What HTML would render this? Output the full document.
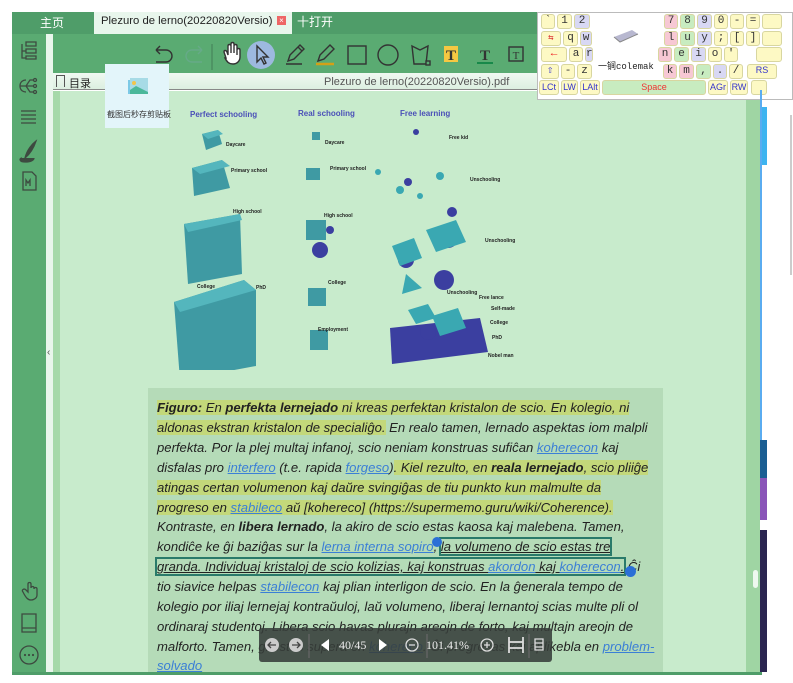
<!DOCTYPE html>
<html><head><meta charset="utf-8"><style>
*{margin:0;padding:0;box-sizing:border-box}
body{width:793px;height:683px;background:#fff;position:relative;overflow:hidden;font-family:"Liberation Sans","Noto Sans CJK SC",sans-serif}
.a{position:absolute}
.tx{position:absolute;left:157px;font-style:italic;font-size:13.1px;color:#222;white-space:nowrap;line-height:20px;font-family:"Liberation Sans",sans-serif}
.hl{background:#c3d87a}
.lk{color:#3b7fd6;text-decoration:underline}
.k{position:absolute;height:15px;background:#fdf9c4;border:1px solid #d8d6a0;border-radius:3px;font:11px "Liberation Mono",monospace;color:#333;text-align:center;line-height:13px}
.fl{font:bold 5px "Liberation Sans",sans-serif;color:#222;position:absolute}
</style></head><body>
<div class="a" style="left:12px;top:12px;width:750px;height:22px;background:#4f9d69"></div>
<div class="a" style="left:40px;top:14px;font-size:12px;color:#fff">主页</div>
<div class="a" style="left:94px;top:12px;width:198px;height:22px;background:#e8f6ec"></div>
<div class="a" style="left:101px;top:15px;font-size:11.3px;color:#222;white-space:nowrap">Plezuro de lerno(20220820Versio)</div>
<div class="a" style="left:277px;top:16px;width:9px;height:9px;background:#e66;color:#fff;font-size:8px;line-height:9px;text-align:center">×</div>
<div class="a" style="left:297px;top:13px;font-size:12px;color:#fff">十打开</div>
<div class="a" style="left:12px;top:34px;width:34px;height:641px;background:#5aab72"></div>
<div class="a" style="left:46px;top:34px;width:7px;height:638px;background:#e9f6ec"></div>
<div class="a" style="left:53px;top:34px;width:709px;height:39px;background:#5aab72"></div>
<div class="a" style="left:53px;top:73px;width:709px;height:17px;background:linear-gradient(#f0f9f2,#dcefe0);border-bottom:1px solid #888"></div>
<div class="a" style="left:56px;top:75px;width:9px;height:12px;border:1px solid #555;border-bottom:none"></div>
<div class="a" style="left:69px;top:75px;font-size:11px;color:#222">目录</div>
<div class="a" style="left:324px;top:76px;font-size:11px;color:#555">Plezuro de lerno(20220820Versio).pdf</div>
<div class="a" style="left:53px;top:91px;width:693px;height:581px;background:#c8ebcc"></div>
<div class="a" style="left:53px;top:91px;width:7px;height:581px;background:#a6d9aa"></div>
<div class="a" style="left:746px;top:91px;width:14px;height:581px;background:#9fd5a3"></div>
<div class="a" style="left:753px;top:570px;width:5px;height:18px;background:#eef8ef;border-radius:3px"></div>
<div class="a" style="left:47px;top:347px;font-size:10px;color:#555">‹</div>
<div class="a" style="left:12px;top:672px;width:750px;height:3px;background:#4f9d69"></div>
<svg class="a" style="left:12px;top:34px" width="34" height="641" fill="none" stroke="#3d4a40" stroke-width="1.3">
<path d="M10 10v14h4M10 17h4M14 8h10v4h-10zM14 15h10v4h-10zM14 22h10v3h-10z"/>
<path d="M8 52h6l4-6h4M14 52l4 0h4M14 52l4 6h4M8 52c0-5 4-6 6-6M8 52c0 5 4 6 6 6" /><circle cx="23" cy="46" r="1.5"/><circle cx="23" cy="52" r="1.5"/><circle cx="23" cy="58" r="1.5"/>
<path d="M9 77h15M9 81h15M9 85h15M9 89h15"/>
<path d="M10 124c-3 0-3 4 3 4s9-2 9-4M13 124c2-8 7-14 11-17c-2 6-5 12-11 17z" fill="#3d4a40"/>
<path d="M11 138h9l4 4v14h-13zM14 152v-6l2 3 2-3v6"/>
<path d="M11 558c-2-2 1-4 3-2l2 2v-8c0-2 3-2 3 0v4c0-2 3-2 3 0v1c0-2 3-2 3 0v6c0 3-3 5-6 5s-5-2-8-8z"/>
<path d="M10 580h14v18h-14zM10 594h14"/>
<circle cx="17" cy="621" r="9"/>
<g fill="#3d4a40" stroke="none"><circle cx="13" cy="621" r="1.1"/><circle cx="17" cy="621" r="1.1"/><circle cx="21" cy="621" r="1.1"/></g>
</svg>
<svg class="a" style="left:140px;top:34px" width="400" height="40" fill="none" stroke="#333" stroke-width="1.4">
<path d="M16 16h10a6 6 0 0 1 0 12h-10M16 16l4-4M16 16l4 4"/>
<path d="M62 16h-10a6 6 0 0 0 0 12h10M62 16l-4-4M62 16l-4 4" stroke="#6a8" />
<path d="M72 10v26" stroke="#4a8a5e"/>
<path d="M86 24l-2-6c0-2 2-2 3 0l1 3v-9c0-2 3-2 3 0v7-9c0-2 3-2 3 0v9-7c0-2 3-2 3 0v9-5c0-2 3-2 3 0v7c0 4-3 7-7 7-4 0-6-2-8-6z" fill="#fff"/>
<circle cx="121" cy="21" r="14" fill="#9db9df" stroke="none"/>
<path d="M117 12v16l4-4 3 6 2-1-3-6h5z"/>
<path d="M146 30h16M148 27l2-6 10-10 4 4-10 10zM158 13l4 4"/>
<path d="M176 30h18" stroke="#d4a017" stroke-width="2.5"/><path d="M178 27l2-6 10-10 4 4-10 10z"/>
<rect x="208" y="12" width="18" height="18"/>
<circle cx="248" cy="21" r="10"/>
<path d="M272 12l8 4 8-4-2 18h-12z"/><rect x="286" y="27" width="4" height="4" fill="#5aab72"/>
<rect x="304" y="12" width="14" height="16" fill="#f5c842" stroke="none"/>
<text x="311" y="26" font-family="Liberation Serif" font-size="15" fill="#333" stroke="none" text-anchor="middle" font-weight="bold">T</text>
<text x="345" y="26" font-family="Liberation Serif" font-size="15" fill="#333" stroke="none" text-anchor="middle" font-weight="bold">T</text>
<path d="M337 29h16" stroke="#18894a" stroke-width="2"/>
<rect x="369" y="13" width="14" height="14"/>
<text x="376" y="25" font-family="Liberation Serif" font-size="11" fill="#333" stroke="none" text-anchor="middle">T</text>
</svg>
<div class="a" style="left:105px;top:64px;width:64px;height:64px;background:#e3f5fa"></div>
<svg class="a" style="left:126px;top:76px" width="24" height="22"><rect x="2" y="4" width="18" height="14" fill="#7cc9e6"/><rect x="4" y="2" width="18" height="16" fill="#a7dbe6"/><path d="M4 14l6-4 12 6v2h-18z" fill="#4bb89a"/><circle cx="8" cy="7" r="2" fill="#f3c54b"/></svg>
<div class="a" style="left:107px;top:109px;font-size:8px;color:#333">截图后秒存剪贴板</div>
<div class="a" style="left:190px;top:110px;font:bold 8px 'Liberation Sans';color:#4a4fb8">Perfect schooling</div>
<div class="a" style="left:298px;top:109px;font:bold 8px 'Liberation Sans';color:#4a4fb8">Real schooling</div>
<div class="a" style="left:400px;top:109px;font:bold 8px 'Liberation Sans';color:#4a4fb8">Free learning</div>
<svg class="a" style="left:170px;top:120px" width="360" height="250">
<g fill="#3f9aa3"><path d="M32 14l16-4 4 14-16 6z"/><path d="M22 48l30-8 8 28-36 8z"/><path d="M14 104l56-10 2 60-54 10z"/><path d="M4 182l70-22 12 10v76l-76 14z"/></g>
<g fill="#54b6bd"><path d="M32 14l16-4 5 4-15 5z"/><path d="M22 48l30-8 8 6-30 8z"/><path d="M14 104l56-10 2 6-54 12z"/><path d="M4 182l70-22 12 10-76 22z"/></g>
<g fill="#3f9aa3"><rect x="142" y="12" width="8" height="8"/><rect x="136" y="48" width="14" height="12"/><rect x="136" y="100" width="20" height="20"/><rect x="138" y="168" width="18" height="18"/><rect x="140" y="210" width="18" height="20"/></g>
<g fill="#3b3fa0"><circle cx="150" cy="130" r="8"/><circle cx="160" cy="110" r="4"/><circle cx="246" cy="12" r="3"/><circle cx="238" cy="62" r="4"/><circle cx="282" cy="92" r="5"/><path d="M220 208l90-10 8 34-96 12z"/><circle cx="236" cy="140" r="8"/><circle cx="278" cy="118" r="10"/><circle cx="274" cy="160" r="10"/><circle cx="258" cy="212" r="8"/></g>
<g fill="#3aa8b2"><path d="M222 126l22-8 8 20-22 8z"/><path d="M256 110l30-10 10 22-30 10z"/><path d="M236 154l16 14-20 6z"/><path d="M238 190l20-6 8 14-20 6z"/><path d="M262 196l26-8 8 20-26 8z"/><circle cx="208" cy="52" r="3"/><circle cx="230" cy="70" r="4"/><circle cx="270" cy="56" r="4"/><circle cx="250" cy="76" r="3"/></g>
</svg>
<div class="fl" style="left:226px;top:142px">Daycare</div><div class="fl" style="left:325px;top:140px">Daycare</div><div class="fl" style="left:449px;top:135px">Free kid</div>
<div class="fl" style="left:231px;top:168px">Primary school</div><div class="fl" style="left:330px;top:166px">Primary school</div><div class="fl" style="left:470px;top:177px">Unschooling</div>
<div class="fl" style="left:233px;top:209px">High school</div><div class="fl" style="left:324px;top:213px">High school</div><div class="fl" style="left:485px;top:238px">Unschooling</div>
<div class="fl" style="left:197px;top:284px">College</div><div class="fl" style="left:256px;top:285px">PhD</div><div class="fl" style="left:328px;top:280px">College</div><div class="fl" style="left:447px;top:290px">Unschooling</div><div class="fl" style="left:479px;top:295px">Free lance</div>
<div class="fl" style="left:491px;top:306px">Self-made</div><div class="fl" style="left:318px;top:327px">Employment</div><div class="fl" style="left:490px;top:320px">College</div><div class="fl" style="left:492px;top:335px">PhD</div><div class="fl" style="left:488px;top:353px">Nobel man</div>
<div class="a" style="left:148px;top:388px;width:515px;height:284px;background:#b5dbb8"></div>
<div class="tx" style="top:398px"><span class="hl"><b>Figuro:</b> En <b>perfekta lernejado</b> ni kreas perfektan kristalon de scio. En kolegio, ni </span></div>
<div class="tx" style="top:418px"><span class="hl">aldonas ekstran kristalon de specialiĝo.</span> En realo tamen, lernado aspektas iom malpli</div>
<div class="tx" style="top:438px">perfekta. Por la plej multaj infanoj, scio neniam konstruas sufiĉan <span class="lk">koherecon</span> kaj</div>
<div class="tx" style="top:458px">disfalas pro <span class="lk">interfero</span> (t.e. rapida <span class="lk">forgeso</span>)<span class="hl">. Kiel rezulto, en <b>reala lernejado</b>, scio pliiĝe</span></div>
<div class="tx" style="top:478px"><span class="hl">atingas certan volumenon kaj daŭre svingiĝas de tiu punkto kun malmulte da </span></div>
<div class="tx" style="top:498px"><span class="hl">progreso en <span class="lk">stabileco</span> aŭ [kohereco] (https://supermemo.guru/wiki/Coherence).</span></div>
<div class="tx" style="top:517px">Kontraste, en <b>libera lernado</b>, la akiro de scio estas kaosa kaj malebena. Tamen,</div>
<div class="tx" style="top:537px">kondiĉe ke ĝi baziĝas sur la <span class="lk">lerna interna sopiro</span>, <span style="outline:2px solid #2a7a6a;text-decoration:underline">la volumeno de scio estas tre </span></div>
<div class="tx" style="top:557px"><span style="outline:2px solid #2a7a6a;text-decoration:underline">granda. Individuaj kristaloj de scio kolizias, kaj konstruas <span class="lk">akordon</span> kaj <span class="lk">koherecon</span>.</span> Ĉi</div>
<div class="tx" style="top:577px">tio siavice helpas <span class="lk">stabilecon</span> kaj plian interligon de scio. En la ĝenerala tempo de</div>
<div class="tx" style="top:597px">kolegio por iliaj lernejaj kontraŭuloj, laŭ volumeno, liberaj lernantoj scias multe pli ol</div>
<div class="tx" style="top:617px">ordinaraj studentoj. Libera scio havas plurajn areojn de forto, kaj multajn areojn de</div>
<div class="tx" style="top:637px">malforto. Tamen, gi estas supera en <span class="lk">kohereco</span>. Ĝi progresas kaj aplikebla en <span class="lk">problem-</span></div>
<div class="tx" style="top:656px"><span class="lk">solvado</span></div>
<div class="a" style="left:432px;top:537px;width:10px;height:10px;border-radius:50%;background:#2a6fd6"></div>
<div class="a" style="left:625px;top:566px;width:11px;height:11px;border-radius:50%;background:#2a6fd6"></div>
<div class="a" style="left:259px;top:628px;width:293px;height:34px;background:rgba(55,62,58,.88);border-radius:3px"></div>
<svg class="a" style="left:259px;top:628px" width="293" height="34" stroke="#ddd" fill="none" stroke-width="1.3">
<circle cx="13" cy="17" r="7" fill="#ccc" stroke="none"/><path d="M17 17h-8M12 14l-3 3 3 3" stroke="#444"/>
<circle cx="37" cy="17" r="7" fill="#ccc" stroke="none"/><path d="M33 17h8M38 14l3 3-3 3" stroke="#444"/>
<path d="M50 6v24M168 6v24M270 6v24" stroke="#666"/>
<path d="M70 11v12l-8-6z" fill="#fff" stroke="none"/><path d="M120 11v12l8-6z" fill="#fff" stroke="none"/>
<circle cx="153" cy="17" r="6"/><path d="M150 17h6"/>
<circle cx="228" cy="17" r="6"/><path d="M225 17h6M228 14v6"/>
<path d="M250 9v16M264 9v16M250 14h14M250 20h14" stroke-width="1.8"/>
<path d="M276 11h8v11h-8zM276 15h8M276 19h8"/>
</svg>
<div class="a" style="left:339px;top:638px;font:12px 'Liberation Serif';color:#eee">40/45</div>
<div class="a" style="left:426px;top:638px;font:12px 'Liberation Serif';color:#eee">101.41%</div>
<div class="a" style="left:537px;top:12px;width:256px;height:88px;background:#fff;border:1px solid #bbb"></div>
<div class="k" style="left:541px;top:14px;width:14px">`</div><div class="k" style="left:557px;top:14px;width:15px">1</div><div class="k" style="left:574px;top:14px;width:16px;background:#d8d8f4">2</div>
<div class="k" style="left:664px;top:14px;width:14px;background:#f7c8d4">7</div><div class="k" style="left:680px;top:14px;width:15px;background:#c8ecc0">8</div><div class="k" style="left:697px;top:14px;width:15px;background:#d8d8f4">9</div><div class="k" style="left:714px;top:14px;width:14px">0</div><div class="k" style="left:730px;top:14px;width:14px">-</div><div class="k" style="left:746px;top:14px;width:14px">=</div><div class="k" style="left:762px;top:14px;width:20px"></div>
<div class="k" style="left:541px;top:31px;width:20px;color:#d33;font-size:9px">⇆</div><div class="k" style="left:563px;top:31px;width:15px">q</div><div class="k" style="left:580px;top:31px;width:12px;background:#d8d8f4">w</div>
<div class="k" style="left:664px;top:31px;width:14px;background:#f7c8d4">l</div><div class="k" style="left:680px;top:31px;width:15px;background:#c8ecc0">u</div><div class="k" style="left:697px;top:31px;width:15px;background:#d8d8f4">y</div><div class="k" style="left:714px;top:31px;width:14px">;</div><div class="k" style="left:730px;top:31px;width:14px">[</div><div class="k" style="left:746px;top:31px;width:14px">]</div><div class="k" style="left:762px;top:31px;width:20px"></div>
<div class="k" style="left:541px;top:47px;width:26px;color:#e22">←</div><div class="k" style="left:569px;top:47px;width:14px">a</div><div class="k" style="left:585px;top:47px;width:8px;background:#d8d8f4">r</div>
<div class="k" style="left:658px;top:47px;width:14px;background:#f7c8d4">n</div><div class="k" style="left:674px;top:47px;width:15px;background:#c8ecc0">e</div><div class="k" style="left:691px;top:47px;width:15px;background:#d8d8f4">i</div><div class="k" style="left:708px;top:47px;width:14px">o</div><div class="k" style="left:724px;top:47px;width:14px">'</div><div class="k" style="left:756px;top:47px;width:26px"></div>
<div class="k" style="left:541px;top:64px;width:18px;color:#33c">⇧</div><div class="k" style="left:561px;top:64px;width:14px">-</div><div class="k" style="left:577px;top:64px;width:15px">z</div>
<div class="k" style="left:663px;top:64px;width:14px;background:#f7c8d4">k</div><div class="k" style="left:679px;top:64px;width:15px;background:#f7c8d4">m</div><div class="k" style="left:696px;top:64px;width:15px;background:#c8ecc0">,</div><div class="k" style="left:713px;top:64px;width:14px;background:#d8d8f4">.</div><div class="k" style="left:729px;top:64px;width:14px">/</div><div class="k" style="left:747px;top:64px;width:30px;color:#33c;font:9px 'Liberation Sans'">RS</div>
<div class="k" style="left:539px;top:80px;width:20px;color:#33c;font:9px 'Liberation Sans';line-height:13px">LCt</div><div class="k" style="left:561px;top:80px;width:17px;color:#33c;font:9px 'Liberation Sans';line-height:13px">LW</div><div class="k" style="left:580px;top:80px;width:20px;color:#33c;font:9px 'Liberation Sans';line-height:13px">LAlt</div>
<div class="k" style="left:602px;top:80px;width:104px;background:#c8ecc0;color:#e33;font:9px 'Liberation Sans';line-height:13px">Space</div>
<div class="k" style="left:708px;top:80px;width:20px;color:#33c;font:9px 'Liberation Sans';line-height:13px">AGr</div><div class="k" style="left:730px;top:80px;width:18px;color:#33c;font:9px 'Liberation Sans';line-height:13px">RW</div><div class="k" style="left:751px;top:80px;width:16px"></div>
<div class="a" style="left:593px;top:15px;width:65px;height:65px;background:#fff"></div>
<svg class="a" style="left:612px;top:28px" width="28" height="16"><path d="M2 9l18-7 6 4-18 8z" fill="#b8b8d0"/><path d="M2 9l6 5 18-8" stroke="#888" fill="none"/></svg>
<div class="a" style="left:598px;top:59px;font:9px 'Liberation Mono','Noto Sans CJK SC',monospace;color:#222">一锏colemak</div>
<div class="a" style="left:760px;top:107px;width:7px;height:58px;background:#3db4f0"></div>
<div class="a" style="left:760px;top:90px;width:2px;height:350px;background:#5aacf0"></div>
<div class="a" style="left:760px;top:440px;width:7px;height:38px;background:#1b5e92"></div>
<div class="a" style="left:760px;top:478px;width:7px;height:42px;background:#8a55b8"></div>
<div class="a" style="left:760px;top:530px;width:7px;height:142px;background:#2a2550"></div>
<div class="a" style="left:790px;top:115px;width:2px;height:160px;background:#ccc"></div>
</body></html>
